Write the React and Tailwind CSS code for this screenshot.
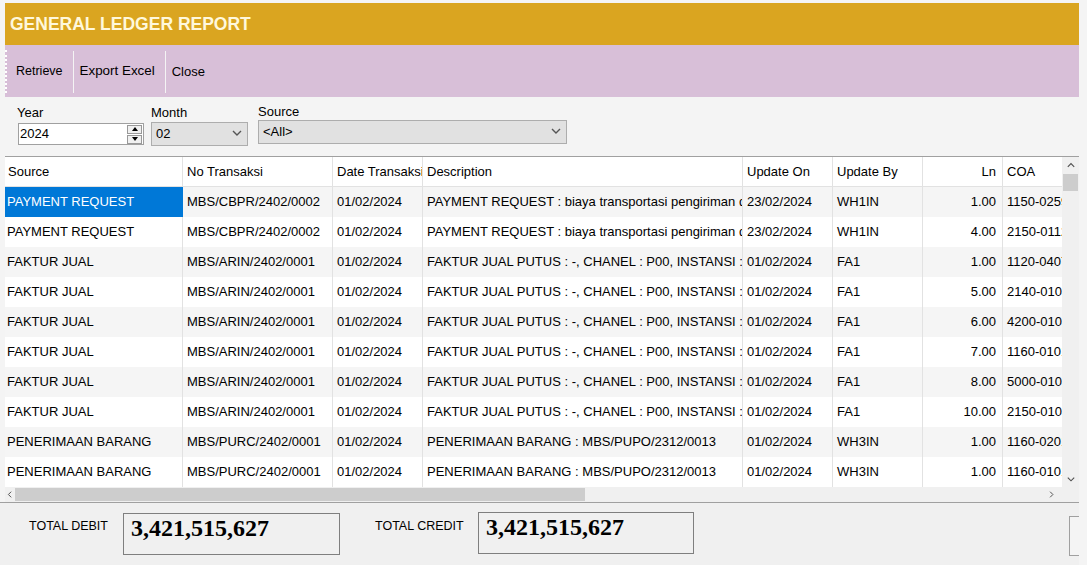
import React from "react";

const columns = [
  { key: "source", label: "Source", w: "w-[178px]", first: true },
  { key: "no", label: "No Transaksi", w: "w-[150px]" },
  { key: "date", label: "Date Transaksi", w: "w-[90px]" },
  { key: "desc", label: "Description", w: "w-[320px]" },
  { key: "upd", label: "Update On", w: "w-[90px]" },
  { key: "by", label: "Update By", w: "w-[90px]" },
  { key: "ln", label: "Ln", w: "w-[80px]", right: true },
  { key: "coa", label: "COA", w: "w-[100px]" },
];

const pr = "PAYMENT REQUEST : biaya transportasi pengiriman dokumen";
const fj = "FAKTUR JUAL PUTUS : -, CHANEL : P00, INSTANSI : UMUM";
const pb = "PENERIMAAN BARANG : MBS/PUPO/2312/0013";

const rows = [
  ["PAYMENT REQUEST", "MBS/CBPR/2402/0002", "01/02/2024", pr, "23/02/2024", "WH1IN", "1.00", "1150-0259-01"],
  ["PAYMENT REQUEST", "MBS/CBPR/2402/0002", "01/02/2024", pr, "23/02/2024", "WH1IN", "4.00", "2150-0112-01"],
  ["FAKTUR JUAL", "MBS/ARIN/2402/0001", "01/02/2024", fj, "01/02/2024", "FA1", "1.00", "1120-0407-01"],
  ["FAKTUR JUAL", "MBS/ARIN/2402/0001", "01/02/2024", fj, "01/02/2024", "FA1", "5.00", "2140-0108-01"],
  ["FAKTUR JUAL", "MBS/ARIN/2402/0001", "01/02/2024", fj, "01/02/2024", "FA1", "6.00", "4200-0105-01"],
  ["FAKTUR JUAL", "MBS/ARIN/2402/0001", "01/02/2024", fj, "01/02/2024", "FA1", "7.00", "1160-0101-01"],
  ["FAKTUR JUAL", "MBS/ARIN/2402/0001", "01/02/2024", fj, "01/02/2024", "FA1", "8.00", "5000-0101-01"],
  ["FAKTUR JUAL", "MBS/ARIN/2402/0001", "01/02/2024", fj, "01/02/2024", "FA1", "10.00", "2150-0108-01"],
  ["PENERIMAAN BARANG", "MBS/PURC/2402/0001", "01/02/2024", pb, "01/02/2024", "WH3IN", "1.00", "1160-0201-01"],
  ["PENERIMAAN BARANG", "MBS/PURC/2402/0001", "01/02/2024", pb, "01/02/2024", "WH3IN", "1.00", "1160-0101-01"],
];

const Chevron = ({ dir = "down", className = "" }) => {
  const pts = {
    down: "1,2 5,6 9,2",
    up: "1,6 5,2 9,6",
    left: "6,1 2,5 6,9",
    right: "3,1 7,5 3,9",
  }[dir];
  return (
    <svg viewBox="0 0 10 10" className={className}>
      <polyline points={pts} fill="none" stroke="currentColor" strokeWidth="1.4" />
    </svg>
  );
};

const Select = ({ value, w }) => (
  <div className={`${w} h-[24px] bg-[#e1e1e1] border border-[#adadad] flex items-center pl-[4px] pr-[5px]`}>
    <span className="flex-1 text-[13px] text-black">{value}</span>
    <Chevron dir="down" className="w-[10px] h-[10px] text-[#555]" />
  </div>
);

const App = () => {
  return (
    <div className="w-[1087px] h-[565px] bg-[#f4f4f4] overflow-hidden font-['Liberation_Sans',Arial,sans-serif] text-black">
      <div className="w-[1079px]">
        <div className="pl-[5px] pt-[3px]">
          <div className="h-[42px] bg-[#daa520] flex items-center pl-[5px] pt-px text-[17.5px] font-bold text-[#fff8dc]">
            GENERAL LEDGER REPORT
          </div>
          <div className="h-[52px] bg-[#d8bfd8] flex items-center text-[12.5px] pt-px">
            <div className="self-stretch my-[4px] w-[3px] border-l-2 border-dotted border-white" />
            <div className="pl-[8px] pr-[10px]">Retrieve</div>
            <div className="w-px h-[42px] bg-[#f4f4f4]" />
            <div className="pl-[6px] pr-[10px] text-[13.4px]">Export Excel</div>
            <div className="w-px h-[42px] bg-[#f4f4f4]" />
            <div className="pl-[6px] text-[13px]">Close</div>
          </div>

          <div className="h-[59px] flex pl-[12px] text-[13px]">
            <div className="flex flex-col pt-[8px] w-[134px]">
              <div className="leading-[16px]">Year</div>
              <div className="mt-[2px] ml-px w-[126px] h-[22px] bg-white border border-[#a0a0a0] flex items-center pl-[1px]">
                <span className="flex-1">2024</span>
                <div className="w-[15px] h-[19px] flex flex-col gap-px mr-px">
                  <div className="flex-1 border border-[#999] bg-[#f0f0f0] flex items-center justify-center">
                    <svg viewBox="0 0 6 4" className="w-[6px] h-[4px]"><polygon points="0,4 3,0 6,4" fill="#000" /></svg>
                  </div>
                  <div className="flex-1 border border-[#999] bg-[#f0f0f0] flex items-center justify-center">
                    <svg viewBox="0 0 6 4" className="w-[6px] h-[4px]"><polygon points="0,0 3,4 6,0" fill="#000" /></svg>
                  </div>
                </div>
              </div>
            </div>
            <div className="flex flex-col pt-[8px] w-[107px]">
              <div className="leading-[16px]">Month</div>
              <div className="mt-[1px]">
                <Select value="02" w="w-[97px]" />
              </div>
            </div>
            <div className="flex flex-col pt-[7px]">
              <div className="leading-[16px]">Source</div>
              <div>
                <Select value="<All>" w="w-[309px]" />
              </div>
            </div>
          </div>

          <div className="border-t border-[#a0a0a0] flex h-[346px] text-[13px]">
            <div className="w-[1057px] flex flex-col overflow-hidden">
              <div className="h-[30px] bg-white flex border-b border-[#e2e2e2] shrink-0">
                {columns.map((c) => (
                  <div
                    key={c.key}
                    className={`${c.w} shrink-0 h-full flex items-center border-r border-[#e2e2e2] whitespace-nowrap overflow-hidden ${c.right ? "justify-end pr-[6px]" : c.first ? "pl-[3px]" : "pl-[4px]"}`}
                  >
                    {c.label}
                  </div>
                ))}
              </div>
              {rows.map((r, i) => (
                <div key={i} className={`h-[30px] flex shrink-0 ${i % 2 === 0 ? "bg-[#f5f5f5]" : "bg-white"}`}>
                  {columns.map((c, j) => {
                    const sel = i === 0 && j === 0;
                    return (
                      <div
                        key={c.key}
                        className={`${c.w} shrink-0 h-full flex items-center border-r whitespace-nowrap overflow-hidden ${sel ? "bg-[#0078d7] text-white border-[#0078d7]" : "border-[#e2e2e2]"} ${c.right ? "justify-end pr-[6px]" : c.first ? "pl-[2px]" : "pl-[4px]"}`}
                      >
                        {r[j]}
                      </div>
                    );
                  })}
                </div>
              ))}
              <div className="h-[15px] bg-[#f0f0f0] flex items-center shrink-0">
                <div className="w-[10px] flex justify-center text-[#505050]">
                  <Chevron dir="left" className="w-[7px] h-[7px]" />
                </div>
                <div className="w-[570px] h-[13px] bg-[#cdcdcd]" />
                <div className="flex-1" />
                <div className="w-[16px] flex justify-center text-[#505050] mr-[3px]">
                  <Chevron dir="right" className="w-[7px] h-[7px]" />
                </div>
              </div>
            </div>
            <div className="w-[17px] flex flex-col bg-[#f0f0f0]">
              <div className="h-[331px] flex flex-col items-center">
                <div className="h-[17px] flex items-center text-[#505050]">
                  <Chevron dir="up" className="w-[8px] h-[8px]" />
                </div>
                <div className="w-[15px] h-[17px] bg-[#cdcdcd]" />
                <div className="flex-1" />
                <div className="h-[17px] flex items-center text-[#505050]">
                  <Chevron dir="down" className="w-[8px] h-[8px]" />
                </div>
              </div>
            </div>
          </div>
        </div>

        <div className="h-[63px] bg-[#f0f0f0] border-t border-[#a0a0a0] flex overflow-hidden">
          <div className="pl-[29px] pt-[14px] w-[123px] text-[12.5px]">TOTAL DEBIT</div>
          <div className="mt-[10px] w-[217px] h-[42px] border border-[#7f7f7f] pl-[7px] font-['Liberation_Serif',serif] font-bold text-[24px] leading-[28px]">
            3,421,515,627
          </div>
          <div className="pl-[35px] pt-[14px] w-[138px] text-[12.5px]">TOTAL CREDIT</div>
          <div className="mt-[9px] w-[216px] h-[42px] border border-[#7f7f7f] pl-[7px] font-['Liberation_Serif',serif] font-bold text-[24px] leading-[28px]">
            3,421,515,627
          </div>
          <div className="flex-1" />
          <div className="mt-[13px] w-[20px] h-[40px] border border-[#a0a0a0] bg-[#f4f4f4] -mr-[10px] shrink-0" />
        </div>
      </div>
    </div>
  );
};

export default App;
